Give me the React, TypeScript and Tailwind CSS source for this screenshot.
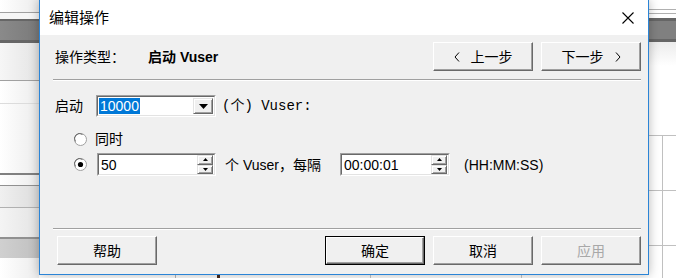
import React from "react";

const FONT = "font-['Liberation_Sans','Noto_Sans_CJK_SC',sans-serif]";

function Btn({
  children,
  def,
  disabled,
  className = "",
}: {
  children: React.ReactNode;
  def?: boolean;
  disabled?: boolean;
  className?: string;
}) {
  const inner = (
    <div
      className={`flex h-full w-full items-center justify-center border-t border-l border-t-white border-l-white border-b border-r border-b-[#696969] border-r-[#696969] bg-[#f0f0f0] shadow-[inset_-1px_-1px_0_#a0a0a0] text-[14px] leading-none ${
        disabled ? "text-[#a8a8a8]" : "text-black"
      }`}
    >
      {children}
    </div>
  );
  if (def) {
    return <div className={`h-[29px] w-[100px] border border-black ${className}`}>{inner}</div>;
  }
  return <div className={`h-[29px] w-[100px] ${className}`}>{inner}</div>;
}

function Sunken({ className = "", children }: { className?: string; children: React.ReactNode }) {
  return (
    <div
      className={`flex items-center border-t border-l border-t-[#a0a0a0] border-l-[#a0a0a0] border-b border-r border-b-white border-r-white ${className}`}
    >
      <div className="flex h-full w-full items-center border-t border-l border-t-[#696969] border-l-[#696969] border-b border-r border-b-[#e3e3e3] border-r-[#e3e3e3] bg-white">
        {children}
      </div>
    </div>
  );
}

function Raised({ className = "", children }: { className?: string; children: React.ReactNode }) {
  return (
    <div
      className={`flex items-center justify-center border-t border-l border-t-[#e3e3e3] border-l-[#e3e3e3] border-b border-r border-b-[#696969] border-r-[#696969] bg-[#f0f0f0] shadow-[inset_1px_1px_0_#ffffff,inset_-1px_-1px_0_#a0a0a0] ${className}`}
    >
      {children}
    </div>
  );
}

function Spinner() {
  return (
    <div className="flex h-full w-[16px] flex-col">
      <Raised className="h-1/2 w-full">
        <svg width="5" height="3" viewBox="0 0 5 3">
          <path d="M2.5 0 L5 3 L0 3 Z" fill="#000" />
        </svg>
      </Raised>
      <Raised className="h-1/2 w-full">
        <svg width="5" height="3" viewBox="0 0 5 3">
          <path d="M0 0 L5 0 L2.5 3 Z" fill="#000" />
        </svg>
      </Raised>
    </div>
  );
}

function Radio({ checked }: { checked?: boolean }) {
  return (
    <svg width="13" height="13" viewBox="0 0 13 13">
      <circle cx="6.5" cy="6.5" r="6" fill="#ffffff" stroke="#a0a0a0" strokeWidth="1" />
      <path d="M1.5 8.5 A5 5 0 0 1 8.5 1.5" fill="none" stroke="#696969" strokeWidth="1" />
      {checked && <circle cx="6.5" cy="6.5" r="2.6" fill="#000" />}
    </svg>
  );
}

function Chevron({ dir }: { dir: "l" | "r" }) {
  return (
    <svg width="6" height="10" viewBox="0 0 6 10">
      <path
        d={dir === "l" ? "M5 0.5 L1 5 L5 9.5" : "M1 0.5 L5 5 L1 9.5"}
        fill="none"
        stroke="#000"
        strokeWidth="1"
      />
    </svg>
  );
}

function Sep({ className = "" }: { className?: string }) {
  return <div className={`h-[2px] border-t border-t-[#a0a0a0] border-b border-b-white ${className}`} />;
}

export default function App() {
  return (
    <div className={`flex h-[278px] w-[676px] overflow-hidden bg-white ${FONT}`}>
      {/* left background strip */}
      <div className="flex h-full w-[39px] shrink-0 flex-col bg-gradient-to-r from-[#ffffff] to-[#ececec]">
        <div className="h-[12px]" />
        <div className="h-px bg-[#a0a0a0]" />
        <div className="h-[6px] bg-[#f6f6f6]" />
        <div className="h-[2px] bg-[#666666]" />
        <div className="h-[19px] bg-gradient-to-r from-[#8a8a8a] to-[#7a7a7a]" />
        <div className="h-[3px] bg-[#666666]" />
        <div className="h-[37px] bg-gradient-to-r from-[#f6f6f6] to-[#e4e4e4]" />
        <div className="h-px bg-[#a0a0a0]" />
        <div className="h-[22px] bg-gradient-to-r from-white to-[#ececec]" />
        <div className="h-px bg-[#dcdcdc]" />
        <div className="h-[69px] bg-gradient-to-r from-white to-[#ececec]" />
        <div className="h-[2px] bg-[#808080]" />
        <div className="h-[10px] bg-gradient-to-r from-white to-[#ececec]" />
        <div className="h-px bg-[#909090]" />
        <div className="h-[21px] bg-gradient-to-r from-[#f0f0f0] to-[#dcdcdc]" />
        <div className="h-px bg-[#b0b0b0]" />
        <div className="h-[29px] bg-gradient-to-r from-[#f4f4f4] to-[#e4e4e4]" />
        <div className="h-[2px] bg-[#909090]" />
        <div className="h-[19px] bg-gradient-to-r from-[#d0d0d0] to-[#c0c0c0]" />
        <div className="flex-1 bg-gradient-to-r from-white to-[#ececec]" />
      </div>

      {/* dialog column */}
      <div className="flex w-[610px] shrink-0 flex-col">
        <div className="relative z-10 flex h-[275px] flex-col border-x border-b border-[#2b84d6] bg-white shadow-[0_0_10px_rgba(0,0,0,0.28)]">
          {/* title bar */}
          <div className="flex h-[35px] items-center bg-white pl-[9px] pr-[14px]">
            <span className="text-[15px] leading-none text-black">编辑操作</span>
            <svg className="ml-auto" width="12" height="12" viewBox="0 0 12 12">
              <path d="M0.5 0.5 L11.5 11.5 M11.5 0.5 L0.5 11.5" stroke="#000" strokeWidth="1.1" />
            </svg>
          </div>

          {/* body */}
          <div className="flex flex-1 flex-col bg-[#f0f0f0] text-[14px] text-black">
            <div className="mt-[7px] flex h-[29px] items-center pl-[15px] pr-[7px]">
              <span className="w-[93px] leading-none">操作类型：</span>
              <span className="font-bold leading-none">启动 Vuser</span>
              <div className="ml-auto flex gap-[8px]">
                <Btn>
                  <span className="mr-[11px] flex">
                    <Chevron dir="l" />
                  </span>
                  上一步
                </Btn>
                <Btn>
                  下一步
                  <span className="ml-[11px] flex">
                    <Chevron dir="r" />
                  </span>
                </Btn>
              </div>
            </div>

            <Sep className="ml-[13px] mr-[7px] mt-[8px]" />

            {/* start row */}
            <div className="mt-[14px] flex h-[22px] items-center pl-[15px]">
              <span className="w-[41px] leading-none">启动</span>
              <Sunken className="h-[22px] w-[120px]">
                <div className="ml-[1px] flex h-[16px] items-center bg-[#0078d7] px-[1px] text-[14px] leading-none text-white">
                  10000
                </div>
                <Raised className="ml-auto mr-[1px] h-[16px] w-[20px]">
                  <svg width="9" height="5" viewBox="0 0 9 5">
                    <path d="M0 0 L9 0 L4.5 5 Z" fill="#000" />
                  </svg>
                </Raised>
              </Sunken>
              <span className="ml-[6px] font-['Liberation_Mono','Noto_Sans_CJK_SC',monospace] text-[14px] leading-none">
                (个) Vuser:
              </span>
            </div>

            {/* radio 1 */}
            <div className="mt-[11px] flex h-[22px] items-center pl-[34px]">
              <div className="w-[21px]">
                <Radio />
              </div>
              <span className="leading-none">同时</span>
            </div>

            {/* radio 2 */}
            <div className="mt-[3px] flex h-[23px] items-center pl-[34px]">
              <div className="w-[23px]">
                <Radio checked />
              </div>
              <Sunken className="h-[23px] w-[119px]">
                <span className="ml-[2px] leading-none">50</span>
                <div className="ml-auto mr-[1px] h-[19px]">
                  <Spinner />
                </div>
              </Sunken>
              <span className="ml-[9px] w-[115px] leading-none">个 Vuser，每隔</span>
              <Sunken className="h-[23px] w-[110px]">
                <span className="ml-[2px] leading-none">00:00:01</span>
                <div className="ml-auto mr-[1px] h-[19px]">
                  <Spinner />
                </div>
              </Sunken>
              <span className="ml-[14px] leading-none">(HH:MM:SS)</span>
            </div>

            <Sep className="ml-[13px] mr-[7px] mt-[52px]" />

            <div className="mt-[6px] flex items-center pl-[17px] pr-[7px]">
              <Btn>帮助</Btn>
              <div className="ml-auto flex gap-[8px]">
                <Btn def>确定</Btn>
                <Btn>取消</Btn>
                <Btn disabled>应用</Btn>
              </div>
            </div>
          </div>
        </div>
        <div className="flex flex-1 bg-white">
          <div className="ml-[136px] w-px bg-[#b8b8b8]" />
          <div className="ml-[41px] w-[3px] bg-[#4a2a1a]" />
          <div className="ml-[150px] w-px bg-[#c8c8c8]" />
          <div className="ml-[150px] w-px bg-[#c8c8c8]" />
        </div>
      </div>

      {/* right background strip */}
      <div className="flex h-full flex-1 flex-col bg-white">
        <div className="h-[9px]" />
        <div className="h-px bg-[#b0b0b0]" />
        <div className="h-[3px]" />
        <div className="h-px bg-[#b0b0b0]" />
        <div className="h-[4px]" />
        <div className="h-[3px] bg-[#666666]" />
        <div className="h-[18px] bg-[#808080]" />
        <div className="h-[3px] bg-[#666666]" />
        <div className="h-[24px] bg-gradient-to-b from-[#ececec] to-white" />
        <div className="h-[69px]" />
        <div className="h-px bg-[#c0c0c0]" />
        <div className="flex h-[54px]">
          <div className="ml-[13px] w-px bg-[#c0c0c0]" />
        </div>
        <div className="h-px bg-[#c0c0c0]" />
        <div className="flex h-[54px]">
          <div className="ml-[13px] w-px bg-[#c0c0c0]" />
        </div>
        <div className="h-px bg-[#c0c0c0]" />
        <div className="flex flex-1">
          <div className="ml-[13px] w-px bg-[#c0c0c0]" />
        </div>
      </div>
    </div>
  );
}
